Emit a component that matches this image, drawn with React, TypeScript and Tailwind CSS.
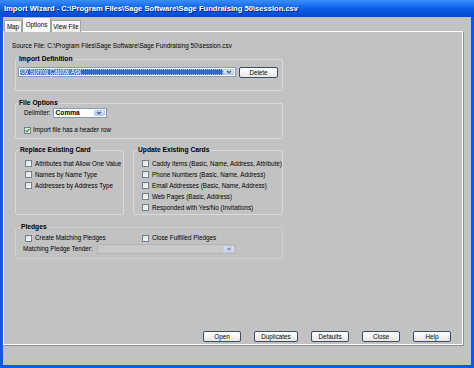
import React from "react"

const Check = ({ checked = false }: { checked?: boolean }) => (
  <span className="flex h-[7px] w-[7px] shrink-0 items-center justify-center border border-[#6f8192] bg-gradient-to-br from-[#dcdcd6] to-white">
    {checked && (
      <svg width="5" height="5" viewBox="0 0 5 5">
        <path d="M0.6 2.4 L2 3.8 L4.4 1" stroke="#21a121" strokeWidth="1.2" fill="none" />
      </svg>
    )}
  </span>
)

const CheckRow = ({ label, checked }: { label: string; checked?: boolean }) => (
  <div className="flex h-[11px] items-center gap-[3px] whitespace-nowrap">
    <Check checked={checked} />
    <span>{label}</span>
  </div>
)

const DropButton = ({ disabled = false }: { disabled?: boolean }) => (
  <span
    className={
      disabled
        ? "flex h-full w-[11px] shrink-0 items-center justify-center rounded-[1px] border border-[#c9d2e6] bg-gradient-to-b from-[#e4ebf8] to-[#c3cfe8]"
        : "flex h-full w-[11px] shrink-0 items-center justify-center rounded-[1px] border border-[#b4c7f1] bg-gradient-to-b from-[#e3ebfe] to-[#b6caf6]"
    }
  >
    <svg width="6" height="4" viewBox="0 0 6 4">
      <path d="M1 0.8 L3 2.8 L5 0.8" stroke={disabled ? "#7d8db0" : "#4d6185"} strokeWidth="1.3" fill="none" />
    </svg>
  </span>
)

const Btn = ({ label, w = "w-[38px]" }: { label: string; w?: string }) => (
  <button
    className={`${w} flex h-[11px] items-center justify-center rounded-[2px] border border-[#3c4e67] bg-gradient-to-b from-white to-[#e8e7e2] text-[6.3px] leading-[8px] text-black`}
  >
    {label}
  </button>
)

export default function App() {
  return (
    <div className="flex h-[368px] w-[474px] flex-col bg-[#0a5ce6] font-['Liberation_Sans',Arial,sans-serif] text-[6.3px] leading-[8px] text-black">
      {/* Title bar */}
      <div className="flex h-[17px] shrink-0 items-center whitespace-nowrap bg-gradient-to-b from-[#3a8df9] via-[#0b5fe9] to-[#0448cc] pl-[4px] text-[7.6px] font-bold text-white [text-shadow:1px_1px_0_#0a246a]">
        Import Wizard - C:\Program Files\Sage Software\Sage Fundraising 50\session.csv
      </div>

      <div className="mx-[3px] mb-[3px] flex flex-1 flex-col bg-[#c2c2c2]">
        {/* Tabs */}
        <div className="relative z-10 flex h-[14px] shrink-0 items-end pl-[1px]">
          <div className="-mb-px flex h-[12px] w-[18px] items-center justify-center rounded-t-[2px] border border-b-0 border-[#9aa3a5] bg-gradient-to-b from-white to-[#ecebe5]">
            Map
          </div>
          <div className="-mb-px flex h-[15px] w-[29px] items-center justify-center rounded-t-[2px] border border-b-0 border-[#9aa3a5] border-t-[#e9b15a] bg-[#fafaf8]">
            Options
          </div>
          <div className="-mb-px flex h-[12px] w-[30px] items-center justify-center whitespace-nowrap rounded-t-[2px] border border-b-0 border-[#9aa3a5] bg-gradient-to-b from-white to-[#ecebe5]">
            View File
          </div>
        </div>

        {/* Panel */}
        <div className="flex h-[314px] w-[460px] shrink-0 flex-col whitespace-nowrap border border-white bg-[#c2c2c2] px-[8px] pb-[2px] pt-[10px] shadow-[1px_1px_0_#8e8e8e]">
          <div>Source File: C:\Program Files\Sage Software\Sage Fundraising 50\session.csv</div>

          <fieldset className="ml-[3px] mt-[5px] w-[268px] min-w-0 rounded-[2px] border border-[#dadada] px-[2px] pb-[12px] pt-[4px]">
            <legend className="px-[1px] text-[6.7px] font-bold">Import Definition</legend>
            <div className="flex h-[11px] items-start">
              <div className="flex h-[10px] w-[218px] items-stretch border border-[#7f9db9] bg-white p-px">
                <div className="flex flex-1 items-center bg-[#316ac5] pl-[1px] text-white outline-dotted outline-1 -outline-offset-1 outline-[#9fb8e6]">
                  06 Spring Capital Ask
                </div>
                <DropButton />
              </div>
              <div className="ml-[3px]">
                <Btn label="Delete" w="w-[39px]" />
              </div>
            </div>
          </fieldset>

          <fieldset className="ml-[3px] mt-[8px] w-[268px] min-w-0 rounded-[2px] border border-[#dadada] px-[2px] pb-[4px] pt-[1px]">
            <legend className="px-[1px] text-[6.7px] font-bold">File Options</legend>
            <div className="ml-[6px] flex h-[10px] items-center gap-[2px]">
              <span>Delimiter:</span>
              <div className="flex h-[10px] w-[54px] items-stretch border border-[#7f9db9] bg-white p-px">
                <div className="flex flex-1 items-center pl-[1px] text-[6.6px] font-bold">Comma</div>
                <DropButton />
              </div>
            </div>
            <div className="ml-[6px] mt-[8px] flex h-[8px] items-center gap-[2px]">
              <Check checked />
              <span>Import file has a header row</span>
            </div>
          </fieldset>

          <div className="ml-[3px] mt-[7px] flex gap-[9px]">
            <fieldset className="w-[109px] min-w-0 rounded-[2px] border border-[#dadada] px-[3px] pt-[4px]">
              <legend className="px-[1px] text-[6.7px] font-bold">Replace Existing Card</legend>
              <div className="ml-[6px] flex flex-col">
                <CheckRow label="Attributes that Allow One Value" />
                <CheckRow label="Names by Name Type" />
                <CheckRow label="Addresses by Address Type" />
              </div>
            </fieldset>
            <fieldset className="w-[150px] min-w-0 rounded-[2px] border border-[#dadada] px-[3px] pb-[1px] pt-[4px]">
              <legend className="px-[1px] text-[6.7px] font-bold">Update Existing Cards</legend>
              <div className="ml-[5px] flex flex-col">
                <CheckRow label="Caddy Items (Basic, Name, Address, Attribute)" />
                <CheckRow label="Phone Numbers (Basic, Name, Address)" />
                <CheckRow label="Email Addresses (Basic, Name, Address)" />
                <CheckRow label="Web Pages (Basic, Address)" />
                <CheckRow label="Responded with Yes/No (Invitations)" />
              </div>
            </fieldset>
          </div>

          <fieldset className="ml-[3px] mt-[8px] w-[268px] min-w-0 rounded-[2px] border border-[#cfcfcf] px-[4px] pb-[4px] pt-[2px]">
            <legend className="px-[1px] text-[6.7px] font-bold">Pledges</legend>
            <div className="ml-[5px] flex h-[10px] items-center">
              <div className="w-[117px]">
                <CheckRow label="Create Matching Pledges" />
              </div>
              <CheckRow label="Close Fulfilled Pledges" />
            </div>
            <div className="ml-[3px] mt-[1px] flex h-[10px] items-center gap-[2px]">
              <span className="w-[72px]">Matching Pledge Tender:</span>
              <div className="flex h-[10px] w-[139px] items-stretch border border-[#b3b3b3] bg-[#c9c9c9] p-px">
                <div className="flex-1" />
                <DropButton disabled />
              </div>
            </div>
          </fieldset>

          {/* Buttons */}
          <div className="mr-[3px] mt-auto flex justify-end gap-[13px]">
            <Btn label="Open" />
            <Btn label="Duplicates" w="w-[44px]" />
            <Btn label="Defaults" />
            <Btn label="Close" />
            <Btn label="Help" />
          </div>
        </div>
      </div>
    </div>
  )
}
